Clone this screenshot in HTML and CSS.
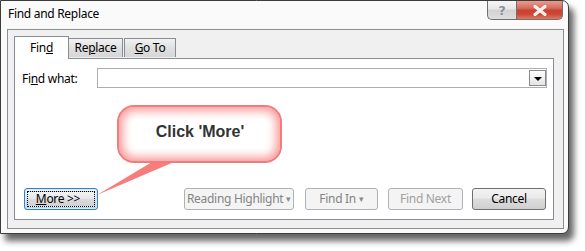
FILE: index.html
```html
<!DOCTYPE html>
<html>
<head>
<meta charset="utf-8">
<link rel="stylesheet" href="styles.css">
</head>
<body>
<div class="window">
  <div class="titlebar">
    <span class="title">Find and Replace</span>
    <div class="caption">
      <div class="cap-btn help">?</div>
      <div class="cap-btn close">
        <svg width="14" height="11" viewBox="0 0 14 11"><path d="M2 1.5 L12 9.5 M12 1.5 L2 9.5" stroke="#ffffff" stroke-width="3" stroke-linecap="round"/><path d="M2 1.5 L12 9.5 M12 1.5 L2 9.5" stroke="#f6e9e6" stroke-width="1.4" stroke-linecap="round"/></svg>
      </div>
    </div>
  </div>
  <div class="client">
    <div class="tabs">
      <div class="tab active">Fin<u>d</u></div>
      <div class="tab">Re<u>p</u>lace</div>
      <div class="tab"><u>G</u>o To</div>
    </div>
    <div class="panel">
      <div class="find-row">
        <label class="label">Fi<u>n</u>d what:</label>
        <div class="combo">
          <div class="drop"><span class="tri"></span></div>
        </div>
      </div>
      <div class="buttons">
        <div class="btn more"><span class="focus"><u>M</u>ore &gt;&gt;</span></div>
        <div class="btn disabled reading">Reading Highlight <span class="arrow">▾</span></div>
        <div class="btn disabled findin">Find In <span class="arrow">▾</span></div>
        <div class="btn disabled findnext">Find Next</div>
        <div class="btn cancel">Cancel</div>
      </div>
    </div>
  </div>
  <svg class="tail" width="200" height="200" viewBox="0 0 200 200"><polygon points="157,159 181,159 97,195" fill="#f77d7d"/></svg>
  <div class="callout">Click 'More'</div>
</div>
</body>
</html>
```
FILE: styles.css
```css
html, body {
  margin: 0;
  padding: 0;
  background: #ffffff;
}
body {
  width: 585px;
  height: 251px;
  overflow: hidden;
  font-family: "Noto Sans", "Open Sans", sans-serif;
  font-size: 12px;
  letter-spacing: -0.3px;
  color: #000;
}
.window {
  position: relative;
  box-sizing: border-box;
  width: 569px;
  height: 234px;
  border: 1px solid #3c3c3c;
  border-radius: 0 7px 7px 0;
  background: #fafafa;
  box-shadow: 5px 7px 6px rgba(0, 0, 0, 0.6);
  display: flex;
  flex-direction: column;
}
.titlebar {
  height: 28px;
  display: flex;
  justify-content: space-between;
  align-items: flex-start;
  flex: none;
}
.title {
  margin: 5px 0 0 7px;
  font-size: 12px;
  line-height: 16px;
  color: #000;
}
.caption {
  display: flex;
  margin-right: 5px;
  margin-top: 0;
}
.cap-btn {
  box-sizing: border-box;
  height: 19px;
  display: flex;
  align-items: center;
  justify-content: center;
  border: 1px solid #6f7076;
  border-top: none;
}
.help {
  width: 29px;
  border-right: none;
  border-radius: 0 0 0 5px;
  background: linear-gradient(#f5f5f5 0%, #e6e6e6 45%, #d2d2d2 50%, #dedede 100%);
  color: #8a8e95;
  font-family: "DejaVu Sans", sans-serif;
  font-weight: bold;
  font-size: 13px;
  letter-spacing: 0;
  text-shadow: 0 0 1px #fff;
}
.close {
  width: 47px;
  border-radius: 0 0 5px 0;
  background: linear-gradient(#e89c90 0%, #d66b5d 40%, #c7412f 52%, #cd4a37 75%, #e07a62 100%);
}
.client {
  flex: 1;
  margin: 0 4px 4px 6px;
  border: 1px solid #8d8e90;
  background: #f0f0f0;
  padding: 6px 9px 8px 6px;
  display: flex;
  flex-direction: column;
}
.tabs {
  display: flex;
  align-items: flex-end;
  height: 22px;
  flex: none;
  position: relative;
  z-index: 1;
}
.tab {
  box-sizing: border-box;
  height: 19px;
  width: 55px;
  border: 1px solid #898c95;
  border-bottom: none;
  background: linear-gradient(#f2f2f2, #e0e0e0 50%, #d6d6d6);
  text-align: center;
  line-height: 18px;
  margin-left: -1px;
  margin-bottom: 1px;
}
.tab:nth-child(3) {
  width: 52px;
  margin-left: 1px;
}
.tab.active {
  height: 23px;
  width: 55px;
  margin-left: 0;
  margin-bottom: -1px;
  background: #ffffff;
  line-height: 22px;
  position: relative;
  z-index: 2;
}
.tab.active + .tab {
  margin-left: -1px;
}
.panel {
  flex: 1;
  background: #ffffff;
  border: 1px solid #898c95;
  padding: 9px 6px 9px 7px;
  display: flex;
  flex-direction: column;
}
.find-row {
  display: flex;
  align-items: center;
  height: 20px;
}
.label {
  width: 75px;
  flex: none;
}
.combo {
  box-sizing: border-box;
  flex: 1;
  height: 20px;
  border: 1px solid #abadb3;
  background: #fff;
  display: flex;
  justify-content: flex-end;
  align-items: center;
}
.drop {
  box-sizing: border-box;
  width: 17px;
  height: 16px;
  border: 1px solid #8a8a8a;
  background: linear-gradient(#fdfdfd, #e4e4e4);
  display: flex;
  align-items: center;
  justify-content: center;
}
.tri {
  width: 0;
  height: 0;
  border-left: 4px solid transparent;
  border-right: 4px solid transparent;
  border-top: 4px solid #000;
  margin-top: 1px;
}
.buttons {
  margin-top: auto;
  display: flex;
  padding: 0 1px 0 2px;
}
.btn {
  box-sizing: border-box;
  height: 22px;
  border-radius: 3px;
  display: flex;
  align-items: center;
  justify-content: center;
  line-height: 16px;
  white-space: nowrap;
}
.more {
  width: 74px;
  border: 1px solid #3c7fb1;
  background: linear-gradient(#eaf6fd 0%, #d9effc 45%, #bee6fd 50%, #a7d9f5 100%);
  box-shadow: inset 0 0 0 1px #cfeafd;
  padding: 2px;
}
.more .focus {
  box-sizing: border-box;
  width: 100%;
  height: 100%;
  border: 1px dotted #000;
  background: linear-gradient(#f3f3f3, #e6e6e6 50%, #dcdcdc 50%, #d2d2d2);
  display: flex;
  align-items: center;
  justify-content: center;
  padding-right: 6px;
}
.disabled {
  border: 1px solid #adb2b5;
  background: #f4f4f4;
  color: #838383;
}
.arrow {
  font-size: 9px;
  margin-left: 3px;
  color: #8a8a8a;
}
.reading {
  width: 110px;
  margin-left: auto;
}
.findin {
  width: 73px;
  margin-left: 11px;
}
.findnext {
  width: 75px;
  margin-left: 10px;
  color: #a0a0a0;
}
.cancel {
  width: 74px;
  margin-left: 9px;
  border: 1px solid #707070;
  background: linear-gradient(#f2f2f2 0%, #ebebeb 45%, #dddddd 50%, #cfcfcf 100%);
}
.tail {
  position: absolute;
  left: -1px;
  top: -1px;
}
.callout {
  position: absolute;
  left: 116px;
  top: 104px;
  box-sizing: border-box;
  width: 165px;
  height: 58px;
  border: 2px solid #f47b7b;
  border-radius: 17px;
  background: #ffffff;
  box-shadow: inset 0 0 10px 4px #f99a9a;
  font-family: "Liberation Sans", Arial, sans-serif;
  font-weight: bold;
  font-size: 16px;
  letter-spacing: 0;
  color: #333333;
  display: flex;
  align-items: flex-start;
  justify-content: center;
  padding-top: 16px;
  padding-left: 1px;
}
```
